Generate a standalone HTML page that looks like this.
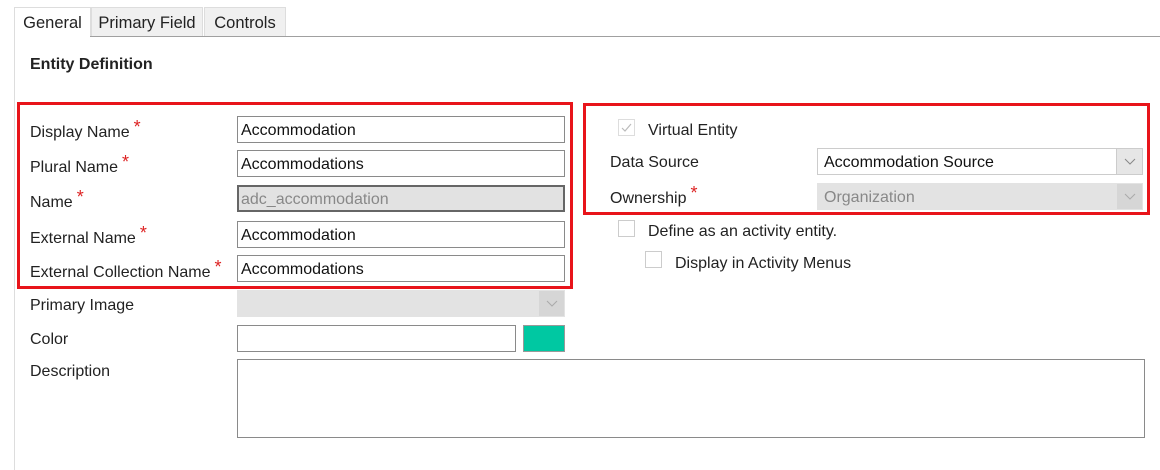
<!DOCTYPE html>
<html><head><style>
body{margin:0;width:1160px;height:470px;background:#fff;font-family:"Liberation Sans",sans-serif;color:#222;position:relative;overflow:hidden}
.a{position:absolute}
.t{font-size:16px;white-space:nowrap;line-height:20px}
.tab{position:absolute;top:7px;height:30px;background:#f0f0f0;border:1px solid #ddd;border-bottom:none;box-sizing:border-box;font-size:16.5px;line-height:31px;text-align:center;color:#222}
.in{position:absolute;box-sizing:border-box;border:1px solid #8a8a8a;background:#fff;font-size:16px;line-height:28px;padding-left:3px;color:#111;white-space:nowrap}
.req{color:#d22;font-size:18px;position:relative;top:-4px;margin-left:4px}
.cb{position:absolute;width:17px;height:17px;border:1px solid #ccc;box-sizing:border-box;background:#fff}
.dd{position:absolute;right:0;top:0;bottom:0;width:25px;border-left:1px solid #ccc;background:#e6e6e6}
.dd svg{position:absolute;left:7px;top:9px}
</style></head><body>
<div class="tab" style="left:14px;width:77px;background:#fff;border-color:#ddd">General</div>
<div class="tab" style="left:91px;width:112px">Primary Field</div>
<div class="tab" style="left:204px;width:82px">Controls</div>
<div class="a" style="left:90px;top:36px;width:1070px;height:1px;background:#a0a0a0"></div>
<div class="a" style="left:14px;top:37px;width:1px;height:433px;background:#ddd"></div>
<div class="a t" style="left:30px;top:55px;font-weight:bold">Entity Definition</div>

<div class="a" style="left:17px;top:102px;width:556px;height:187px;border:3px solid #e8141a;box-sizing:border-box"></div>
<div class="a t" style="left:30px;top:121px">Display Name<span class="req">*</span></div>
<div class="a t" style="left:30px;top:156px">Plural Name<span class="req">*</span></div>
<div class="a t" style="left:30px;top:191px">Name<span class="req">*</span></div>
<div class="a t" style="left:30px;top:227px">External Name<span class="req">*</span></div>
<div class="a t" style="left:30px;top:261px">External Collection Name<span class="req">*</span></div>
<div class="in" style="left:237px;top:116px;width:328px;height:27px">Accommodation</div>
<div class="in" style="left:237px;top:150px;width:328px;height:27px">Accommodations</div>
<div class="in" style="left:237px;top:185px;width:328px;height:27px;background:#e2e2e2;border:2px solid #666;color:#888;line-height:26px;padding-left:2px">adc_accommodation</div>
<div class="in" style="left:237px;top:221px;width:328px;height:27px">Accommodation</div>
<div class="in" style="left:237px;top:255px;width:328px;height:27px">Accommodations</div>

<div class="a t" style="left:30px;top:296px">Primary Image</div>
<div class="in" style="left:237px;top:290px;width:328px;height:27px;background:#e3e3e3;border-color:#e3e3e3"><div class="dd" style="background:#d6d6d6;border:none"><svg width="12" height="7"><path d="M1 1l5 5 5-5" stroke="#aaa" fill="none"/></svg></div></div>
<div class="a t" style="left:30px;top:330px">Color</div>
<div class="in" style="left:237px;top:325px;width:279px;height:27px"></div>
<div class="a" style="left:523px;top:325px;width:42px;height:27px;background:#00c8a2;border:1px solid #999;box-sizing:border-box"></div>
<div class="a t" style="left:30px;top:362px">Description</div>
<div class="in" style="left:237px;top:359px;width:908px;height:79px"></div>

<div class="a" style="left:583px;top:103px;width:567px;height:112px;border:3px solid #e8141a;box-sizing:border-box"></div>
<div class="cb" style="left:618px;top:119px;border-color:#ddd"><svg width="15" height="15" style="position:absolute;left:0;top:0"><path d="M3 8l3 3 6-7" stroke="#bbb" fill="none" stroke-width="1.2"/></svg></div>
<div class="a t" style="left:648px;top:121px">Virtual Entity</div>
<div class="a t" style="left:610px;top:153px">Data Source</div>
<div class="in" style="left:817px;top:148px;width:326px;height:27px;border-color:#ccc;padding-left:6px">Accommodation Source<div class="dd"><svg width="12" height="7"><path d="M1 1l5 5 5-5" stroke="#888" fill="none"/></svg></div></div>
<div class="a t" style="left:610px;top:187px">Ownership<span class="req">*</span></div>
<div class="in" style="left:817px;top:183px;width:326px;height:27px;background:#e3e3e3;border-color:#e3e3e3;color:#888;padding-left:6px">Organization<div class="dd" style="background:#d6d6d6;border:none"><svg width="12" height="7"><path d="M1 1l5 5 5-5" stroke="#aaa" fill="none"/></svg></div></div>
<div class="cb" style="left:618px;top:220px"></div>
<div class="a t" style="left:648px;top:222px">Define as an activity entity.</div>
<div class="cb" style="left:645px;top:251px"></div>
<div class="a t" style="left:675px;top:254px">Display in Activity Menus</div>
</body></html>
